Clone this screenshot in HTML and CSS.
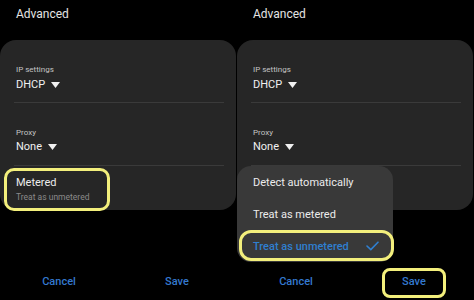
FILE: index.html
```html
<!DOCTYPE html>
<html>
<head>
<meta charset="utf-8">
<link rel="stylesheet" href="styles.css">
</head>
<body>
<div class="screen">
  <div class="panel">
    <div class="title">Advanced</div>
    <div class="card">
      <div class="section first">
        <div class="label">IP settings</div>
        <div class="value">DHCP <svg class="caret" width="9" height="6" viewBox="0 0 9 6"><path d="M0 0H9L4.5 6Z" fill="#f0f0f0"/></svg></div>
      </div>
      <div class="section second">
        <div class="label">Proxy</div>
        <div class="value">None <svg class="caret" width="9" height="6" viewBox="0 0 9 6"><path d="M0 0H9L4.5 6Z" fill="#f0f0f0"/></svg></div>
      </div>
      <div class="section third">
        <div class="name">Metered</div>
        <div class="sub">Treat as unmetered</div>
        <div class="ring metered-ring"></div>
      </div>
    </div>
    <div class="actions">
      <div class="btn">Cancel</div>
      <div class="btn">Save</div>
    </div>
  </div>
  <div class="panel">
    <div class="title">Advanced</div>
    <div class="card">
      <div class="section first">
        <div class="label">IP settings</div>
        <div class="value">DHCP <svg class="caret" width="9" height="6" viewBox="0 0 9 6"><path d="M0 0H9L4.5 6Z" fill="#f0f0f0"/></svg></div>
      </div>
      <div class="section second">
        <div class="label">Proxy</div>
        <div class="value">None <svg class="caret" width="9" height="6" viewBox="0 0 9 6"><path d="M0 0H9L4.5 6Z" fill="#f0f0f0"/></svg></div>
      </div>
      <div class="section third covered"></div>
    </div>
    <div class="menu">
      <div class="item">Detect automatically</div>
      <div class="item">Treat as metered</div>
      <div class="item selected">Treat as unmetered <svg class="check" width="13" height="10" viewBox="0 0 13 10"><path d="M1 5L4.8 8.6L12 1.2" fill="none" stroke="#2f7fd0" stroke-width="1.6" stroke-linecap="round" stroke-linejoin="round"/></svg></div>
      <div class="ring menu-ring"></div>
    </div>
    <div class="actions">
      <div class="btn">Cancel</div>
      <div class="btn save">Save<div class="ring save-ring"></div></div>
    </div>
  </div>
</div>
</body>
</html>
```
FILE: styles.css
```css
* { box-sizing: border-box; }
html, body {
  margin: 0;
  padding: 0;
  background: #000;
}
body {
  width: 474px;
  height: 300px;
  overflow: hidden;
  font-family: Roboto, "Noto Sans", sans-serif;
  color: #eee;
}
.screen {
  display: flex;
  gap: 1px;
  width: 474px;
  height: 300px;
}
.panel {
  position: relative;
  width: 236px;
  height: 300px;
  display: flex;
  flex-direction: column;
}
.title {
  height: 40px;
  padding: 7px 0 0 16px;
  font-size: 12px;
  line-height: 14px;
  color: #e4e4e4;
}
.card {
  background: #262626;
  border-radius: 16px;
  padding: 0 12px 0 14px;
  height: 170px;
}
.section {
  position: relative;
  padding-left: 2px;
}
.section.first {
  padding-top: 25px;
  padding-bottom: 10px;
  border-bottom: 1px solid #3a3a3a;
}
.section.second {
  padding-top: 25px;
  padding-bottom: 11px;
  border-bottom: 1px solid #3a3a3a;
}
.section.third {
  padding-top: 10px;
}
.section.covered {
  height: 44px;
}
.label {
  font-size: 8px;
  line-height: 10px;
  color: #c4c4c4;
}
.value {
  margin-top: 3px;
  font-size: 11px;
  line-height: 14px;
  color: #f0f0f0;
  display: flex;
  align-items: center;
  gap: 6px;
}
.second .value { margin-top: 2px; }
.name {
  font-size: 11px;
  line-height: 14px;
  color: #ececec;
}
.sub {
  margin-top: 2px;
  font-size: 8.5px;
  line-height: 10px;
  color: #8a8a8a;
}
.ring {
  position: absolute;
  border: 3px solid #f3ef7c;
  pointer-events: none;
}
.metered-ring {
  left: -10px;
  top: 2px;
  width: 106px;
  height: 43px;
  border-radius: 10px;
}
.actions {
  margin-top: auto;
  display: flex;
  height: 32px;
  padding-bottom: 4px;
}
.btn {
  position: relative;
  flex: 1;
  text-align: center;
  font-size: 11px;
  line-height: 28px;
  font-weight: 500;
  color: #3479cf;
}
.save-ring {
  left: 27px;
  top: 0;
  width: 64px;
  height: 30px;
  border-radius: 8px;
}
.menu {
  position: absolute;
  left: 0;
  top: 166px;
  width: 156px;
  background: #393939;
  border-radius: 14px;
  padding: 0;
}
.item {
  height: 32px;
  padding-left: 16px;
  display: flex;
  align-items: center;
  font-size: 11px;
  color: #ececec;
}
.item.selected {
  color: #2f7fd0;
  font-weight: 500;
}
.check {
  margin-left: auto;
  margin-right: 14px;
}
.menu-ring {
  left: 2px;
  top: 64px;
  width: 155px;
  height: 31px;
  border-radius: 12px;
}
```
